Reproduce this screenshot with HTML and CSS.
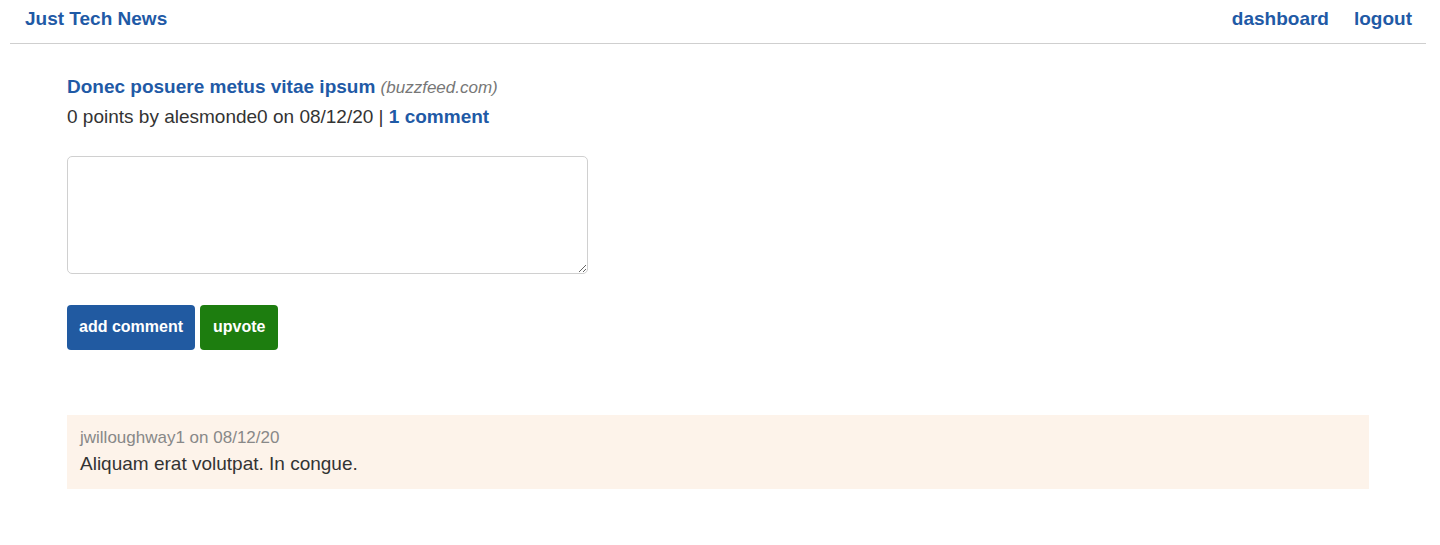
FILE: index.html
```html
<!DOCTYPE html>
<html>
<head>
<meta charset="utf-8">
<link rel="stylesheet" href="styles.css">
</head>
<body>
<header class="site-header">
  <a class="brand" href="#">Just Tech News</a>
  <nav class="nav">
    <a href="#">dashboard</a>
    <a href="#">logout</a>
  </nav>
</header>
<main class="main">
  <article class="post">
    <div class="post-title"><a href="#">Donec posuere metus vitae ipsum</a> <span class="domain">(buzzfeed.com)</span></div>
    <div class="post-meta">0 points by alesmonde0 on 08/12/20 | <a href="#">1 comment</a></div>
  </article>
  <form class="comment-form">
    <textarea class="comment-input"></textarea>
    <div class="actions">
      <button type="button" class="btn btn-blue">add comment</button>
      <button type="button" class="btn btn-green">upvote</button>
    </div>
  </form>
  <section class="comments">
    <div class="comment">
      <div class="comment-meta">jwilloughway1 on 08/12/20</div>
      <div class="comment-text">Aliquam erat volutpat. In congue.</div>
    </div>
  </section>
</main>
</body>
</html>
```
FILE: styles.css
```css
* { box-sizing: border-box; }
body {
  margin: 0;
  font-family: "Liberation Sans", Arial, sans-serif;
  color: #333;
  background: #fff;
}
a { color: #1f5aa6; text-decoration: none; font-weight: bold; }
.site-header {
  margin: 0 14px 0 10px;
  height: 44px;
  padding: 8px 14px 0 15px;
  border-bottom: 1px solid #cfcfcf;
  display: flex;
  justify-content: space-between;
  align-items: flex-start;
  line-height: 22px;
}
.brand { font-size: 19px; }
.nav { display: flex; gap: 25px; font-size: 19px; }
.main { margin: 0 71px 0 67px; padding-top: 31px; }
.post-title { font-size: 19px; line-height: 24px; }
.domain { font-style: italic; font-weight: normal; color: #777; font-size: 17px; }
.post-meta { font-size: 19px; line-height: 34px; }
.comment-form { margin-top: 22px; }
.comment-input {
  display: block;
  width: 521px;
  height: 118px;
  border: 1px solid #d0d0d0;
  border-radius: 5px;
  margin: 0;
  font-family: inherit;
}
.actions { margin-top: 31px; display: flex; gap: 5px; }
.btn {
  height: 45px;
  border: none;
  border-radius: 4px;
  color: #fff;
  font-family: inherit;
  font-weight: bold;
  font-size: 16px;
  padding: 0 12px 2px;
}
.btn-green { padding: 0 13px 2px; }
.btn-blue { background: #215aa1; }
.btn-green { background: #1d7d0f; }
.comments { margin-top: 65px; }
.comment {
  background: #fdf3ea;
  padding: 12px 13px 11px;
}
.comment-meta { color: #888; font-size: 17px; line-height: 22px; }
.comment-text { font-size: 19px; line-height: 29px; }
```
